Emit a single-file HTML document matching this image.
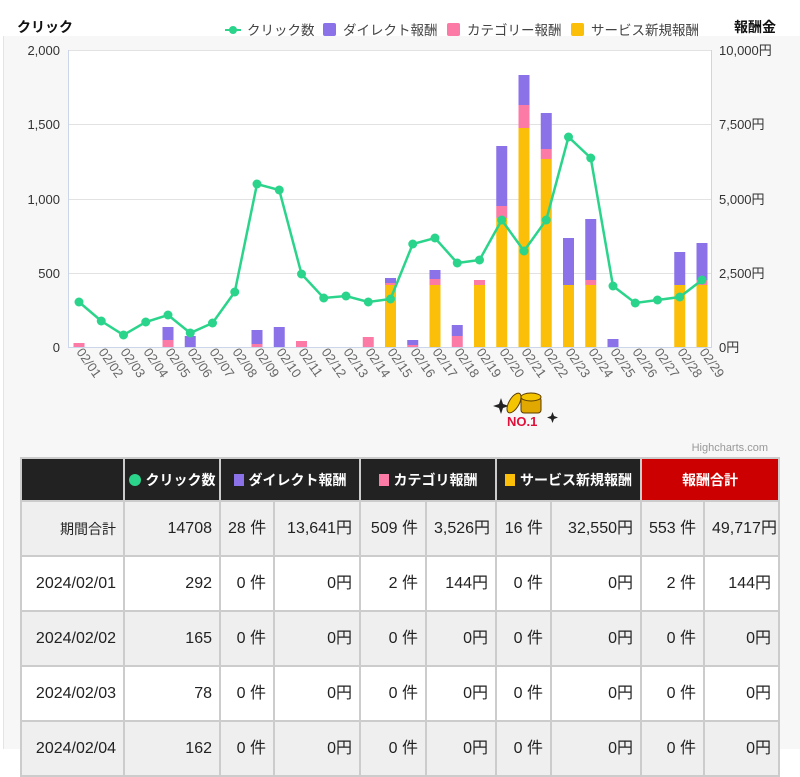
<!DOCTYPE html>
<html><head><meta charset="utf-8"><style>
*{margin:0;padding:0;box-sizing:border-box}
body{width:800px;height:749px;overflow:hidden;background:#fff;font-family:"Liberation Sans","Noto Sans CJK JP",sans-serif;position:relative}
#bg{position:absolute;left:3px;top:36px;width:797px;height:713px;background:#f7f7f7;border-left:1px solid #e4e4e4}
svg{position:absolute;left:0;top:0}
table{position:absolute;left:20px;top:457px;border-collapse:collapse;table-layout:fixed;width:758px;font-size:16px;color:#222}
td,th{border:2px solid #ccc;height:55px;text-align:right;vertical-align:middle;padding:0 7px;white-space:nowrap;overflow:hidden;line-height:20px}
th{background:#222;color:#fff;height:43px;text-align:center;font-size:14px;font-weight:bold;padding:0 2px}
th.red{background:#c00}
tr.g td{background:#efefef}
tr.w td{background:#fff}
.sq{display:inline-block;width:10px;height:12px;margin-right:5px;vertical-align:-1px}
.dot{display:inline-block;width:12px;height:12px;border-radius:50%;background:#2bd48b;margin-right:5px;vertical-align:-1px}
</style></head><body>
<div id="bg"></div>
<svg width="800" height="460" font-family="Liberation Sans, Noto Sans CJK JP, sans-serif">
<rect x="68" y="50" width="644" height="297" fill="#fff"/>
<g stroke="#e2e2e2" stroke-width="1">
<line x1="68" y1="50.5" x2="712" y2="50.5"/><line x1="68" y1="124.5" x2="712" y2="124.5"/>
<line x1="68" y1="199.5" x2="712" y2="199.5"/><line x1="68" y1="273.5" x2="712" y2="273.5"/>
</g>
<line x1="68.5" y1="50" x2="68.5" y2="348" stroke="#ccd6eb"/>
<line x1="711.5" y1="50" x2="711.5" y2="348" stroke="#ccd6eb"/>
<line x1="68" y1="347.5" x2="712" y2="347.5" stroke="#ccd6eb"/>
<g id="bars"></g>
<g id="line"></g>
<g font-size="13" fill="#333" text-anchor="end">
<text x="60" y="55">2,000</text><text x="60" y="129">1,500</text><text x="60" y="204">1,000</text><text x="60" y="278">500</text><text x="60" y="352">0</text>
</g>
<g font-size="13" fill="#333">
<text x="719" y="55">10,000円</text><text x="719" y="129">7,500円</text><text x="719" y="204">5,000円</text><text x="719" y="278">2,500円</text><text x="719" y="352">0円</text>
</g>
<text x="17" y="32" font-size="14" font-weight="bold" fill="#111">クリック</text>
<text x="776" y="32" font-size="14" font-weight="bold" fill="#111" text-anchor="end">報酬金</text>
<g font-size="13.5" fill="#444">
<line x1="225" y1="30" x2="241" y2="30" stroke="#2bd48b" stroke-width="2"/><circle cx="233" cy="30" r="4" fill="#2bd48b"/>
<text x="247" y="35">クリック数</text>
<rect x="323" y="23" width="13" height="13" rx="2" fill="#8b72e8"/><text x="343" y="35">ダイレクト報酬</text>
<rect x="447" y="23" width="13" height="13" rx="2" fill="#fc7ba6"/><text x="467" y="35">カテゴリー報酬</text>
<rect x="571" y="23" width="13" height="13" rx="2" fill="#fbbf09"/><text x="591" y="35">サービス新規報酬</text>
</g>
<g font-size="13" fill="#666">
<text transform="translate(76,352) rotate(55)">02/01</text>
<text transform="translate(98,352) rotate(55)">02/02</text>
<text transform="translate(120,352) rotate(55)">02/03</text>
<text transform="translate(143,352) rotate(55)">02/04</text>
<text transform="translate(165,352) rotate(55)">02/05</text>
<text transform="translate(187,352) rotate(55)">02/06</text>
<text transform="translate(209,352) rotate(55)">02/07</text>
<text transform="translate(232,352) rotate(55)">02/08</text>
<text transform="translate(254,352) rotate(55)">02/09</text>
<text transform="translate(276,352) rotate(55)">02/10</text>
<text transform="translate(298,352) rotate(55)">02/11</text>
<text transform="translate(321,352) rotate(55)">02/12</text>
<text transform="translate(343,352) rotate(55)">02/13</text>
<text transform="translate(365,352) rotate(55)">02/14</text>
<text transform="translate(387,352) rotate(55)">02/15</text>
<text transform="translate(410,352) rotate(55)">02/16</text>
<text transform="translate(432,352) rotate(55)">02/17</text>
<text transform="translate(454,352) rotate(55)">02/18</text>
<text transform="translate(476,352) rotate(55)">02/19</text>
<text transform="translate(499,352) rotate(55)">02/20</text>
<text transform="translate(521,352) rotate(55)">02/21</text>
<text transform="translate(543,352) rotate(55)">02/22</text>
<text transform="translate(565,352) rotate(55)">02/23</text>
<text transform="translate(588,352) rotate(55)">02/24</text>
<text transform="translate(610,352) rotate(55)">02/25</text>
<text transform="translate(632,352) rotate(55)">02/26</text>
<text transform="translate(654,352) rotate(55)">02/27</text>
<text transform="translate(677,352) rotate(55)">02/28</text>
<text transform="translate(699,352) rotate(55)">02/29</text>
</g>
<g>
<path d="M499 404 l2 -6 l2 6 l6 2 l-6 2 l-2 6 l-2 -6 l-6 -2z" fill="#222"/>
<path d="M551 416 l1.5 -4 l1.5 4 l4 1.5 l-4 1.5 l-1.5 4 l-1.5 -4 l-4 -1.5z" fill="#222"/>
<rect x="521" y="397" width="20" height="16" rx="3" fill="#e0a800" stroke="#5a3c00"/>
<ellipse cx="531" cy="397" rx="10" ry="4" fill="#f5c400" stroke="#5a3c00"/>
<ellipse cx="514" cy="403" rx="5" ry="11" transform="rotate(30 514 403)" fill="#f5c400" stroke="#5a3c00"/>
<text x="507" y="426" font-size="13" font-weight="bold" fill="#e0103a">NO.1</text>
</g>
<text x="768" y="451" font-size="11" fill="#999" text-anchor="end">Highcharts.com</text>
</svg>
<table>
<colgroup><col style="width:103px"><col style="width:96px"><col style="width:54px"><col style="width:86px"><col style="width:66px"><col style="width:70px"><col style="width:55px"><col style="width:90px"><col style="width:63px"><col style="width:75px"></colgroup>
<tr><th></th><th><span class="dot"></span>クリック数</th><th colspan="2"><span class="sq" style="background:#8b72e8"></span>ダイレクト報酬</th><th colspan="2"><span class="sq" style="background:#fc7ba6"></span>カテゴリ報酬</th><th colspan="2"><span class="sq" style="background:#fbbf09"></span>サービス新規報酬</th><th colspan="2" class="red">報酬合計</th></tr>
<tr class="g"><td style="font-size:14px">期間合計</td><td>14708</td><td>28 件</td><td>13,641円</td><td>509 件</td><td>3,526円</td><td>16 件</td><td>32,550円</td><td>553 件</td><td>49,717円</td></tr>
<tr class="w"><td>2024/02/01</td><td>292</td><td>0 件</td><td>0円</td><td>2 件</td><td>144円</td><td>0 件</td><td>0円</td><td>2 件</td><td>144円</td></tr>
<tr class="g"><td>2024/02/02</td><td>165</td><td>0 件</td><td>0円</td><td>0 件</td><td>0円</td><td>0 件</td><td>0円</td><td>0 件</td><td>0円</td></tr>
<tr class="w"><td>2024/02/03</td><td>78</td><td>0 件</td><td>0円</td><td>0 件</td><td>0円</td><td>0 件</td><td>0円</td><td>0 件</td><td>0円</td></tr>
<tr class="g"><td>2024/02/04</td><td>162</td><td>0 件</td><td>0円</td><td>0 件</td><td>0円</td><td>0 件</td><td>0円</td><td>0 件</td><td>0円</td></tr>
</table>
<script>
var ns="http://www.w3.org/2000/svg";
function cx(i){return 79+i*22.25}
var B={0:[347,343,343],4:[347,340,327],5:[347,347,336],8:[347,344,330],9:[347,347,327],10:[347,341,341],13:[347,337,337],
14:[285,283,278],15:[347,345,340],16:[285,279,270],17:[347,336,325],18:[285,280,280],19:[218,206,146],20:[128,105,75],
21:[159,149,113],22:[285,285,238],23:[285,280,219],24:[347,347,339],27:[285,285,252],28:[285,280,243]};
var g=document.getElementById("bars");
function r(x,y1,y2,c){if(y2-y1<=0)return;var e=document.createElementNS(ns,"rect");e.setAttribute("x",x-5.5);e.setAttribute("y",y1);e.setAttribute("width",11);e.setAttribute("height",y2-y1);e.setAttribute("fill",c);g.appendChild(e);}
for(var k in B){var b=B[k],x=cx(+k);r(x,b[0],347,"#fbbf09");r(x,b[1],b[0],"#fc7ba6");r(x,b[2],b[1],"#8b72e8");}
var L=[302,321,335,322,315,333,323,292,184,190,274,298,296,302,299,244,238,263,260,220,251,220,137,158,286,303,300,297,280];
var lg=document.getElementById("line"),d="";
L.forEach(function(y,i){d+=(i?"L":"M")+cx(i)+" "+y;});
var p=document.createElementNS(ns,"path");p.setAttribute("d",d);p.setAttribute("fill","none");p.setAttribute("stroke","#2bd48b");p.setAttribute("stroke-width","2.5");lg.appendChild(p);
L.forEach(function(y,i){var c=document.createElementNS(ns,"circle");c.setAttribute("cx",cx(i));c.setAttribute("cy",y);c.setAttribute("r",4.5);c.setAttribute("fill","#2bd48b");lg.appendChild(c);});
</script>
</body></html>
